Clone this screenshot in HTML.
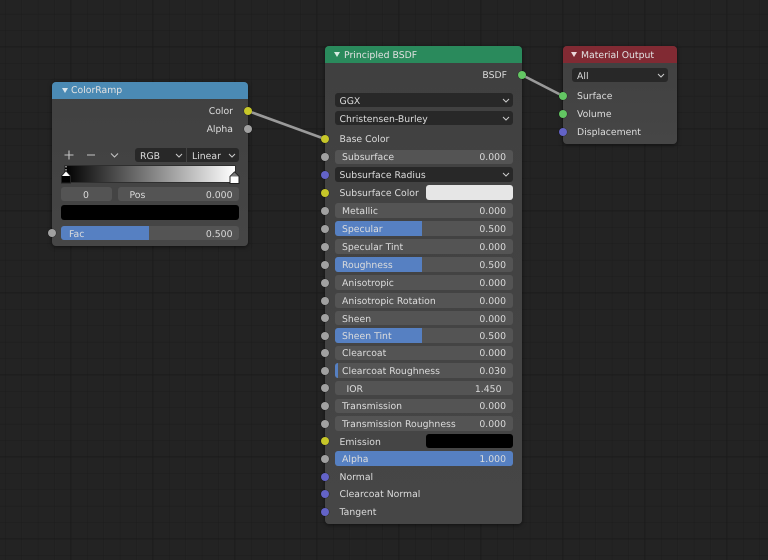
<!DOCTYPE html>
<html><head><meta charset="utf-8"><style>
html,body{margin:0;padding:0;width:768px;height:560px;overflow:hidden;background:#232323}
body{position:relative;font:9.3px/17.2px "DejaVu Sans",sans-serif;color:#dcdcdc;text-rendering:geometricPrecision;filter:blur(.3px)}
#bg{position:absolute;left:0;top:0}
.n{position:absolute;background:linear-gradient(#404040,#464646);border-radius:4px;box-shadow:0 1px 4px rgba(0,0,0,.55)}
.h{position:absolute;left:0;right:0;top:0;height:17px;border-radius:4px 4px 0 0;line-height:18.6px}
.h span{position:absolute;font-size:9.3px;color:#e2e2e2}
.h svg{position:absolute;top:6px}
.f,.d,.c{position:absolute;left:334.5px;width:178px;height:14.4px;border-radius:3px;overflow:hidden}
.f{background:#545454}
.f i{position:absolute;left:0;top:0;bottom:0;background:#5680c2}
.f b{position:absolute;left:7.5px;top:0;font-weight:normal;white-space:nowrap}
.f u{position:absolute;right:6.5px;top:0;text-decoration:none}
.d{background:#282828}
.d b{position:absolute;left:5px;top:0;font-weight:normal;white-space:nowrap}
.d svg{position:absolute;right:3px;top:5px}
.c{left:426px;width:86.5px;background:#e6e6e6}
.l{position:absolute;white-space:nowrap}
.s{position:absolute;width:8px;height:8px;border-radius:50%;margin:-4px 0 0 -4px;box-shadow:0 0 0 .5px rgba(0,0,0,.35)}
.y{background:#c7c729}.g{background:#a1a1a1}.b{background:#6363c7}.e{background:#63c763}
</style></head><body>
<svg id="bg" width="768" height="560" xmlns="http://www.w3.org/2000/svg">
<defs>
<pattern id="p1" x="5.1" y="13.9" width="16.4" height="16.4" patternUnits="userSpaceOnUse"><path d="M0 0V16.4M0 0H16.4" stroke="#1c1c1c" stroke-width="1" fill="none"/></pattern>
<pattern id="p2" x="70.7" y="46.7" width="82" height="82" patternUnits="userSpaceOnUse"><path d="M0 0V82M0 0H82" stroke="#171717" stroke-width="1" fill="none"/></pattern>
</defs>
<rect width="768" height="560" fill="#232323"/>
<rect width="768" height="560" fill="url(#p1)"/>
<rect width="768" height="560" fill="url(#p2)"/>
</svg>

<!-- ColorRamp -->
<div class="n" style="left:52px;top:82px;width:196px;height:164px">
  <div class="h" style="background:#4b8ab4"><svg width="8" height="6" style="left:9px"><path d="M1 0H7L4 5Z" fill="#d8e4ec"/></svg><span style="left:19px">ColorRamp</span></div>
</div>
<div class="l" style="right:535px;top:102.800px">Color</div>
<div class="l" style="right:535px;top:120.800px">Alpha</div>
<svg style="position:absolute;left:63px;top:149px" width="60" height="12"><path d="M1.5 6H10.5M6 1.5V10.5M24 6H32M48 4.5L51.5 8L55 4.5" stroke="#c4c4c4" stroke-width="1.1" fill="none"/></svg>
<div class="d" style="left:135px;top:148px;width:51px;border-radius:3px 0 0 3px"><b style="left:5px">RGB</b><svg width="8" height="5"><path d="M1 1L4 4L7 1" stroke="#ccc" fill="none"/></svg></div>
<div class="d" style="left:187px;top:148px;width:52px;border-radius:0 3px 3px 0"><b style="left:5px">Linear</b><svg width="8" height="5"><path d="M1 1L4 4L7 1" stroke="#ccc" fill="none"/></svg></div>
<div style="position:absolute;left:65px;top:166px;width:170px;height:15.5px;background:linear-gradient(90deg,#000,#fff);box-shadow:0 0 0 .6px #222"></div>
<svg style="position:absolute;left:60px;top:165px" width="180" height="20"><path d="M6 1V9" stroke="#fff" stroke-dasharray="1.5 1.5"/><path d="M6 6L10.5 11V18H1.5V11Z" fill="#000" stroke="#222"/><path d="M2 11L6 6.5L10 11Z" fill="#fff"/><path d="M174.500 7L179 11.500V18.500H170V11.500Z" fill="#fff" stroke="#222"/><path d="M170.500 11.500L174.500 7.500L178.500 11.500Z" fill="#777"/></svg>
<div class="f" style="left:61px;top:187px;width:51px"><b style="left:22px">0</b></div>
<div class="f" style="left:117.500px;top:187px;width:121.500px"><b style="left:12px">Pos</b><u>0.000</u></div>
<div style="position:absolute;left:61px;top:205px;width:178px;height:15px;background:#000;border-radius:3px"></div>
<div class="f" style="left:61px;top:226px;width:178px"><i style="width:88px"></i><b style="left:8px">Fac</b><u>0.500</u></div>

<!-- Principled -->
<div class="n" style="left:325px;top:46px;width:197px;height:478px">
  <div class="h" style="background:#2a8a5c"><svg width="8" height="6" style="left:8px"><path d="M1 0H7L4 5Z" fill="#d8ece2"/></svg><span style="left:19px;top:.5px">Principled BSDF</span></div>
</div>
<div class="l" style="right:261px;top:67.300px">BSDF</div>
<div class="d" style="top:93px"><b>GGX</b><svg width="8" height="5"><path d="M1 1L4 4L7 1" stroke="#ccc" fill="none"/></svg></div>
<div class="d" style="top:111px"><b>Christensen-Burley</b><svg width="8" height="5"><path d="M1 1L4 4L7 1" stroke="#ccc" fill="none"/></svg></div>
<div class="l" style="left:339.500px;top:130.800px">Base Color</div>
<div class="f" style="top:149.800px"><b style="top:-1px">Subsurface</b><u style="top:-1px">0.000</u></div>
<div class="d" style="top:167.300px"><b>Subsurface Radius</b><svg width="8" height="5"><path d="M1 1L4 4L7 1" stroke="#ccc" fill="none"/></svg></div>
<div class="l" style="left:339.500px;top:185.300px">Subsurface Color</div>
<div class="c" style="top:185.300px"></div>
<div class="f" style="top:203.300px"><b>Metallic</b><u>0.000</u></div>
<div class="f" style="top:221.300px"><i style="width:87.500px"></i><b>Specular</b><u>0.500</u></div>
<div class="f" style="top:239.300px"><b>Specular Tint</b><u>0.000</u></div>
<div class="f" style="top:257.300px"><i style="width:87.500px"></i><b>Roughness</b><u>0.500</u></div>
<div class="f" style="top:275.300px"><b>Anisotropic</b><u>0.000</u></div>
<div class="f" style="top:293.300px"><b>Anisotropic Rotation</b><u>0.000</u></div>
<div class="f" style="top:310.800px"><b>Sheen</b><u>0.000</u></div>
<div class="f" style="top:328.300px"><i style="width:87.500px"></i><b>Sheen Tint</b><u>0.500</u></div>
<div class="f" style="top:345.800px"><b style="top:-.5px">Clearcoat</b><u style="top:-.5px">0.000</u></div>
<div class="f" style="top:363.300px"><i style="width:3.500px"></i><b>Clearcoat Roughness</b><u>0.030</u></div>
<div class="f" style="top:380.800px"><b style="left:12px">IOR</b><u style="right:11px">1.450</u></div>
<div class="f" style="top:398.800px"><b style="top:-.5px">Transmission</b><u style="top:-.5px">0.000</u></div>
<div class="f" style="top:416.300px"><b>Transmission Roughness</b><u>0.000</u></div>
<div class="l" style="left:339.500px;top:433.800px">Emission</div>
<div class="c" style="top:433.800px;background:#000"></div>
<div class="f" style="top:451.300px"><i style="width:178px"></i><b>Alpha</b><u>1.000</u></div>
<div class="l" style="left:339.500px;top:469.300px">Normal</div>
<div class="l" style="left:339.500px;top:486.300px">Clearcoat Normal</div>
<div class="l" style="left:339.500px;top:504.300px">Tangent</div>

<!-- Material Output -->
<div class="n" style="left:563px;top:46px;width:114px;height:98px">
  <div class="h" style="background:#812a33"><svg width="8" height="6" style="left:7px"><path d="M1 0H7L4 5Z" fill="#ecd8da"/></svg><span style="left:18px;top:1px">Material Output</span></div>
</div>
<div class="d" style="left:572px;top:68px;width:96px"><b>All</b><svg width="8" height="5"><path d="M1 1L4 4L7 1" stroke="#ccc" fill="none"/></svg></div>
<div class="l" style="left:577px;top:88.300px">Surface</div>
<div class="l" style="left:577px;top:106.300px">Volume</div>
<div class="l" style="left:577px;top:124.300px">Displacement</div>

<!-- Wires -->
<svg style="position:absolute;left:0;top:0" width="768" height="560"><path d="M248 111C262 116 311 134 325 139" stroke="#9a9a9a" stroke-width="2.600" fill="none"/><path d="M522 75C530 79 555 92 563 96" stroke="#9a9a9a" stroke-width="2.600" fill="none"/></svg>

<!-- Sockets -->
<div class="s y" style="left:248px;top:111px"></div>
<div class="s g" style="left:248px;top:129px"></div>
<div class="s g" style="left:52px;top:233px"></div>
<div class="s e" style="left:522px;top:75px"></div>
<div class="s y" style="left:325px;top:139px"></div>
<div class="s g" style="left:325px;top:157px"></div>
<div class="s b" style="left:325px;top:174.500px"></div>
<div class="s y" style="left:325px;top:192.500px"></div>
<div class="s g" style="left:325px;top:210.500px"></div>
<div class="s g" style="left:325px;top:228.500px"></div>
<div class="s g" style="left:325px;top:246.500px"></div>
<div class="s g" style="left:325px;top:264.500px"></div>
<div class="s g" style="left:325px;top:282.500px"></div>
<div class="s g" style="left:325px;top:300.500px"></div>
<div class="s g" style="left:325px;top:318px"></div>
<div class="s g" style="left:325px;top:335.500px"></div>
<div class="s g" style="left:325px;top:353px"></div>
<div class="s g" style="left:325px;top:370.500px"></div>
<div class="s g" style="left:325px;top:388px"></div>
<div class="s g" style="left:325px;top:406px"></div>
<div class="s g" style="left:325px;top:423.500px"></div>
<div class="s y" style="left:325px;top:441px"></div>
<div class="s g" style="left:325px;top:458.500px"></div>
<div class="s b" style="left:325px;top:476.500px"></div>
<div class="s b" style="left:325px;top:494px"></div>
<div class="s b" style="left:325px;top:511.500px"></div>
<div class="s e" style="left:563px;top:96px"></div>
<div class="s e" style="left:563px;top:113.500px"></div>
<div class="s b" style="left:563px;top:131.500px"></div>
</body></html>
